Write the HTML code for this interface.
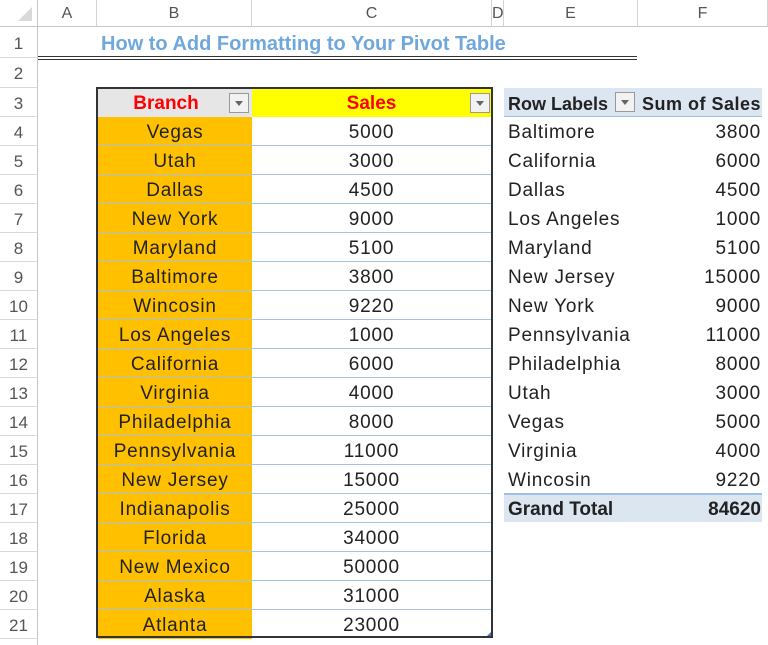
<!DOCTYPE html>
<html><head><meta charset="utf-8"><style>
*{margin:0;padding:0;box-sizing:border-box}
body{width:768px;height:645px;background:#fff;position:relative;overflow:hidden;font-family:"Liberation Sans",sans-serif;color:#222}
.a{position:absolute}
.ch{position:absolute;top:0;height:27px;line-height:27px;text-align:center;font-size:16px;color:#555;border-right:1px solid #d4d4d4;border-bottom:1px solid #c6c6c6}
.rn{position:absolute;left:0;width:38px;height:29px;line-height:31px;text-align:center;font-size:17px;color:#555;border-bottom:1px solid #dadada;border-right:1px solid #c6c6c6}
.c{position:absolute;height:29px;line-height:32px;font-size:19px;letter-spacing:0.8px;white-space:nowrap}
.bd{font-weight:bold;letter-spacing:0}
.b{left:98px;width:154px;background:#ffc000;text-align:center;border-bottom:1px solid #a9c4e2}
.s{left:252px;width:239px;text-align:center;border-bottom:1px solid #a9c4e2}
.e{left:508px}
.f{left:600px;width:161px;text-align:right}
.dd{position:absolute;width:20px;height:20px;border:1px solid #999;background:#f2f2f2}
.dd:after{content:"";position:absolute;left:5px;top:7px;border-left:4px solid transparent;border-right:4px solid transparent;border-top:5px solid #666}
</style></head><body>
<div class="a" style="left:0;top:0;width:38px;height:27px;border-right:1px solid #c6c6c6;border-bottom:1px solid #c6c6c6"></div>
<div class="a" style="left:18px;top:7px;width:0;height:0;border-left:14px solid transparent;border-bottom:14px solid #d9d9d9"></div>
<div class="ch" style="left:38px;width:59px">A</div>
<div class="ch" style="left:97px;width:155px">B</div>
<div class="ch" style="left:252px;width:240px">C</div>
<div class="ch" style="left:492px;width:12px">D</div>
<div class="ch" style="left:504px;width:134px">E</div>
<div class="ch" style="left:638px;width:130px">F</div>

<div class="rn" style="top:27px;height:31px;line-height:33px">1</div>
<div class="rn" style="top:58px;height:30px;line-height:32px">2</div>
<div class="rn" style="top:88px">3</div><div class="rn" style="top:117px">4</div><div class="rn" style="top:146px">5</div><div class="rn" style="top:175px">6</div><div class="rn" style="top:204px">7</div><div class="rn" style="top:233px">8</div><div class="rn" style="top:262px">9</div><div class="rn" style="top:291px">10</div><div class="rn" style="top:320px">11</div><div class="rn" style="top:349px">12</div><div class="rn" style="top:378px">13</div><div class="rn" style="top:407px">14</div><div class="rn" style="top:436px">15</div><div class="rn" style="top:465px">16</div><div class="rn" style="top:494px">17</div><div class="rn" style="top:523px">18</div><div class="rn" style="top:552px">19</div><div class="rn" style="top:581px">20</div><div class="rn" style="top:610px">21</div>
<div class="a" style="left:0;top:639px;width:38px;height:6px;border-right:1px solid #c6c6c6"></div>

<div class="c" style="left:101px;top:28px;font-weight:bold;font-size:20px;letter-spacing:0;color:#6fa8dc">How to Add Formatting to Your Pivot Table</div>
<div class="a" style="left:38px;top:56px;width:599px;height:4px;border-top:1px solid #333;border-bottom:1px solid #333"></div>

<div class="c bd" style="left:98px;top:88px;width:154px;background:#e7e6e6;text-align:center;color:#ff0000;padding-right:18px">Branch</div>
<div class="dd" style="left:229px;top:93px"></div>
<div class="c bd" style="left:252px;top:88px;width:239px;background:#ffff00;text-align:center;color:#ff0000">Sales</div>
<div class="dd" style="left:470px;top:93px"></div>

<div class="c b" style="top:117px">Vegas</div><div class="c s" style="top:117px">5000</div>
<div class="c b" style="top:146px">Utah</div><div class="c s" style="top:146px">3000</div>
<div class="c b" style="top:175px">Dallas</div><div class="c s" style="top:175px">4500</div>
<div class="c b" style="top:204px">New York</div><div class="c s" style="top:204px">9000</div>
<div class="c b" style="top:233px">Maryland</div><div class="c s" style="top:233px">5100</div>
<div class="c b" style="top:262px">Baltimore</div><div class="c s" style="top:262px">3800</div>
<div class="c b" style="top:291px">Wincosin</div><div class="c s" style="top:291px">9220</div>
<div class="c b" style="top:320px">Los Angeles</div><div class="c s" style="top:320px">1000</div>
<div class="c b" style="top:349px">California</div><div class="c s" style="top:349px">6000</div>
<div class="c b" style="top:378px">Virginia</div><div class="c s" style="top:378px">4000</div>
<div class="c b" style="top:407px">Philadelphia</div><div class="c s" style="top:407px">8000</div>
<div class="c b" style="top:436px">Pennsylvania</div><div class="c s" style="top:436px">11000</div>
<div class="c b" style="top:465px">New Jersey</div><div class="c s" style="top:465px">15000</div>
<div class="c b" style="top:494px">Indianapolis</div><div class="c s" style="top:494px">25000</div>
<div class="c b" style="top:523px">Florida</div><div class="c s" style="top:523px">34000</div>
<div class="c b" style="top:552px">New Mexico</div><div class="c s" style="top:552px">50000</div>
<div class="c b" style="top:581px">Alaska</div><div class="c s" style="top:581px">31000</div>
<div class="c b" style="top:610px;border-bottom:none">Atlanta</div><div class="c s" style="top:610px;border-bottom:none">23000</div>
<div class="a" style="left:96px;top:87px;width:397px;height:551px;border:2px solid #333"></div>
<div class="a" style="left:487px;top:632px;width:0;height:0;border-left:4px solid transparent;border-bottom:4px solid #4472c4"></div>

<div class="a" style="left:504px;top:88px;width:258px;height:29px;background:#dce6f1;border-bottom:1px solid #9bc2e6"></div>
<div class="c bd" style="left:508px;top:88px;font-size:18px">Row Labels</div>
<div class="dd" style="left:615px;top:92px"></div>
<div class="c bd" style="left:600px;top:88px;width:161px;text-align:right;font-size:18px;letter-spacing:0.5px">Sum of Sales</div>

<div class="c e" style="top:117px">Baltimore</div><div class="c f" style="top:117px">3800</div>
<div class="c e" style="top:146px">California</div><div class="c f" style="top:146px">6000</div>
<div class="c e" style="top:175px">Dallas</div><div class="c f" style="top:175px">4500</div>
<div class="c e" style="top:204px">Los Angeles</div><div class="c f" style="top:204px">1000</div>
<div class="c e" style="top:233px">Maryland</div><div class="c f" style="top:233px">5100</div>
<div class="c e" style="top:262px">New Jersey</div><div class="c f" style="top:262px">15000</div>
<div class="c e" style="top:291px">New York</div><div class="c f" style="top:291px">9000</div>
<div class="c e" style="top:320px">Pennsylvania</div><div class="c f" style="top:320px">11000</div>
<div class="c e" style="top:349px">Philadelphia</div><div class="c f" style="top:349px">8000</div>
<div class="c e" style="top:378px">Utah</div><div class="c f" style="top:378px">3000</div>
<div class="c e" style="top:407px">Vegas</div><div class="c f" style="top:407px">5000</div>
<div class="c e" style="top:436px">Virginia</div><div class="c f" style="top:436px">4000</div>
<div class="c e" style="top:465px">Wincosin</div><div class="c f" style="top:465px">9220</div>
<div class="a" style="left:504px;top:493px;width:258px;height:29px;background:#dce6f1;border-top:2px solid #9bc2e6"></div>
<div class="c e bd" style="top:494px">Grand Total</div><div class="c f bd" style="top:494px">84620</div>
</body></html>
